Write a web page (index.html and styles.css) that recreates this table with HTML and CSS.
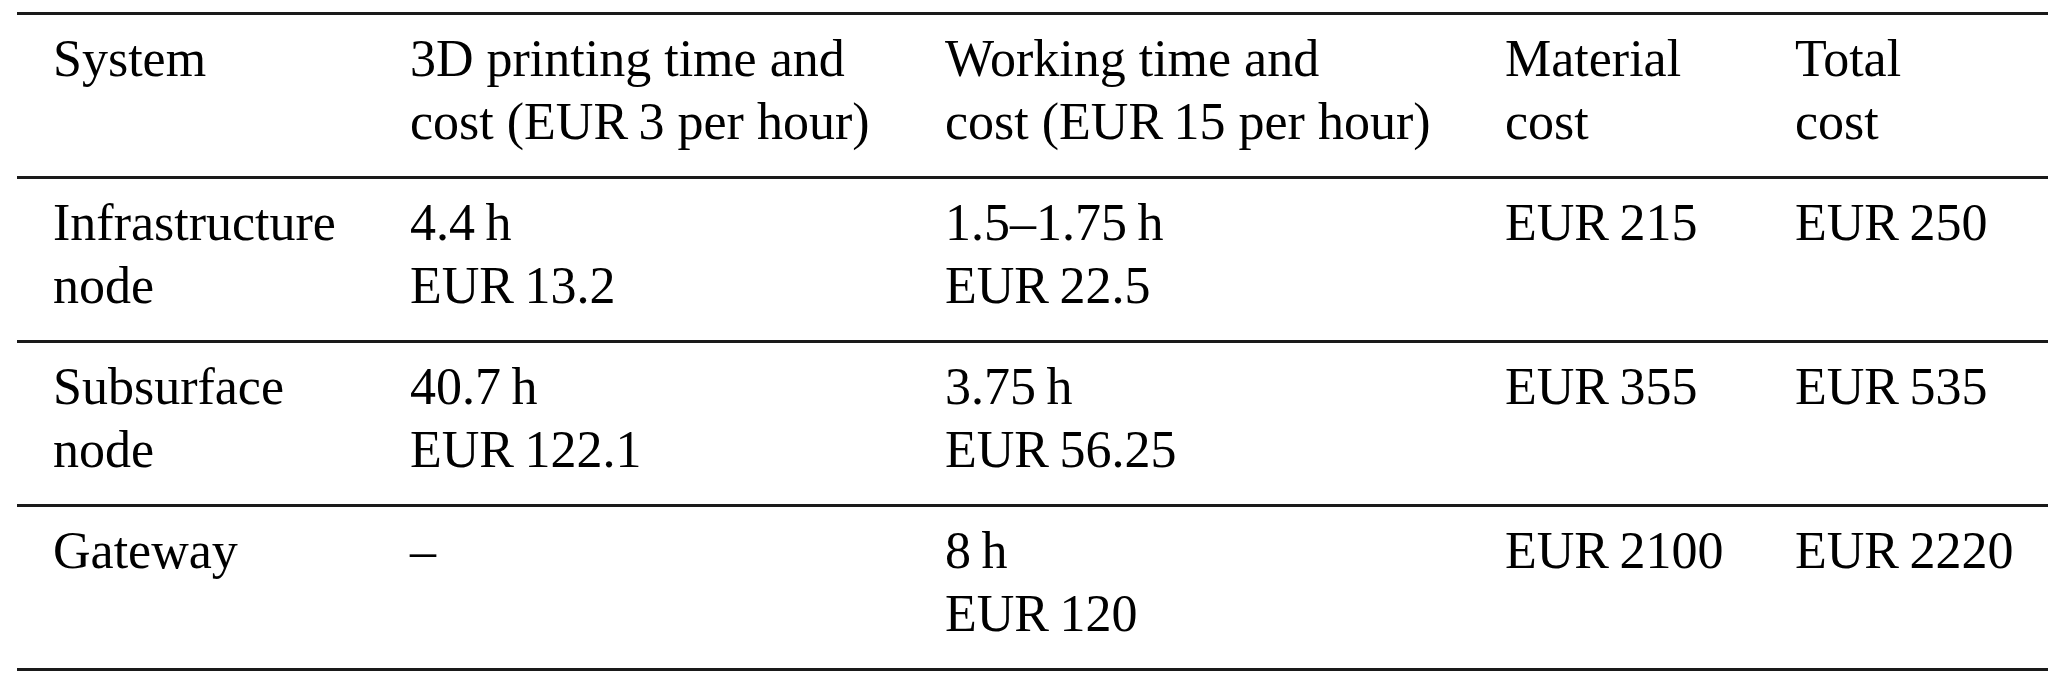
FILE: index.html
```html
<!DOCTYPE html>
<html lang="en">
<head>
<meta charset="utf-8">
<title>Cost table</title>
<link rel="stylesheet" href="styles.css">
</head>
<body>
<table class="cost-table">
  <colgroup>
    <col class="c1"><col class="c2"><col class="c3"><col class="c4"><col class="c5">
  </colgroup>
  <thead>
    <tr>
      <th>System</th>
      <th>3D printing time and<br>cost (EUR&thinsp;3 per hour)</th>
      <th>Working time and<br>cost (EUR&thinsp;15 per hour)</th>
      <th>Material<br>cost</th>
      <th>Total<br>cost</th>
    </tr>
  </thead>
  <tbody>
    <tr>
      <td>Infrastructure<br>node</td>
      <td>4.4&thinsp;h<br>EUR&thinsp;13.2</td>
      <td>1.5–1.75&thinsp;h<br>EUR&thinsp;22.5</td>
      <td>EUR&thinsp;215</td>
      <td>EUR&thinsp;250</td>
    </tr>
    <tr>
      <td>Subsurface<br>node</td>
      <td>40.7&thinsp;h<br>EUR&thinsp;122.1</td>
      <td>3.75&thinsp;h<br>EUR&thinsp;56.25</td>
      <td>EUR&thinsp;355</td>
      <td>EUR&thinsp;535</td>
    </tr>
    <tr>
      <td>Gateway<br>&nbsp;</td>
      <td>–</td>
      <td>8&thinsp;h<br>EUR&thinsp;120</td>
      <td>EUR&thinsp;2100</td>
      <td>EUR&thinsp;2220</td>
    </tr>
  </tbody>
</table>
</body>
</html>
```
FILE: styles.css
```css
html, body {
  background: #ffffff;
}
body {
  margin: 12px 0 0 17px;
  font-family: "Liberation Serif", "Times New Roman", serif;
  color: #000;
}
.cost-table {
  width: 2031px;
  table-layout: fixed;
  border-collapse: collapse;
  border-top: 3px solid #1a1a1a;
  font-size: 52px;
  line-height: 63px;
}
.c1 { width: 357px; }
.c2 { width: 535px; }
.c3 { width: 560px; }
.c4 { width: 290px; }
.c5 { width: 289px; }
.cost-table tr {
  border-bottom: 3px solid #1a1a1a;
}
.cost-table th,
.cost-table td {
  font-weight: normal;
  text-align: left;
  vertical-align: top;
  padding: 12px 36px 23px 36px;
  white-space: nowrap;
}
```
